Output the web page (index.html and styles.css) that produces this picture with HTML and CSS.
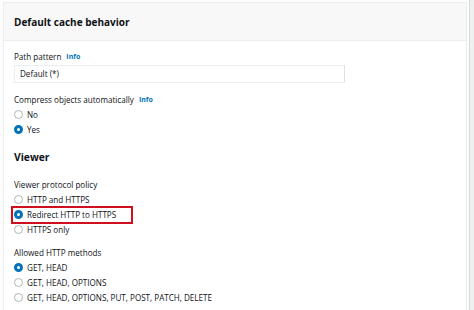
FILE: index.html
```html
<!DOCTYPE html>
<html>
	<head>
		<meta charset="UTF-8">
		<title>Default cache behavior</title>
		<link rel="stylesheet" href="styles.css">
	</head>
	<body>
		<div class="page">
			<div class="card">
				<div class="card-head">
					<h2>Default cache behavior</h2>
				</div>
				<div class="card-body">
					<div class="field">
						<div class="label">Path pattern <a class="info">Info</a></div>
						<div class="input">Default (*)</div>
					</div>
					<div class="field">
						<div class="label">Compress objects automatically <a class="info">Info</a></div>
						<div class="radio"><span class="dot"></span>No</div>
						<div class="radio"><span class="dot on"></span>Yes</div>
					</div>
					<h3>Viewer</h3>
					<div class="field">
						<div class="label">Viewer protocol policy</div>
						<div class="radio"><span class="dot"></span>HTTP and HTTPS</div>
						<div class="radio"><span class="mark"><span class="dot on"></span>Redirect HTTP to HTTPS</span></div>
						<div class="radio"><span class="dot"></span>HTTPS only</div>
					</div>
					<div class="field methods">
						<div class="label">Allowed HTTP methods</div>
						<div class="radio"><span class="dot on"></span>GET, HEAD</div>
						<div class="radio"><span class="dot"></span>GET, HEAD, OPTIONS</div>
						<div class="radio"><span class="dot"></span>GET, HEAD, OPTIONS, PUT, POST, PATCH, DELETE</div>
					</div>
				</div>
			</div>
		</div>
	</body>
</html>
```

FILE: styles.css
```css
*{
	margin:0;padding:0;
	box-sizing:border-box;
}
body{
	background:#eef0f0;
	font-family:"Open Sans","Liberation Sans",sans-serif;
	color:#0f1217;
	font-size:8.1px;
}
.page{
	width:470px;
	height:310px;
	padding:2px 2px 0 3px;
	background:#fdfdfd;
	border-right:1px solid #d5d9d9;
	overflow:hidden;
}
.card{
	background:#fff;
	border:1px solid #eaeded;
	border-bottom:none;
	height:308px;
}
.card-head{
	height:38px;
	background:#f8f8f8;
	border-bottom:1px solid #eaeded;
	padding-left:10px;
	display:flex;
	align-items:center;
}
h2{
	font-size:10px;
	font-weight:700;
}
.card-body{
	padding:9px 0 0 10px;
}
.field{
	margin-bottom:10px;
}
.label{
	height:14px;
	line-height:14px;
	display:flex;
	align-items:center;
	gap:5px;
}
.info{
	color:#0073bb;
	font-weight:700;
	font-size:7px;
}
.input{
	width:331px;
	height:18px;
	margin-top:1px;
	border:1px solid #eaeded;
	border-right-color:#dfe2e2;
	padding-left:5px;
	line-height:16px;
}
.radio{
	height:15px;
	display:flex;
	align-items:center;
}
.dot{
	width:9px;
	height:9px;
	border:1px solid #aab7b8;
	border-radius:50%;
	margin-right:4px;
	background:#fff;
}
.dot.on{
	border:3px solid #0073bb;
}
.mark{
	display:flex;
	align-items:center;
	height:18px;
	margin-left:-3px;
	padding:0 15px 0 1px;
	border:2px solid #d0101e;
}
h3{
	font-size:10.3px;
	font-weight:700;
	height:20px;
	line-height:20px;
	margin-bottom:11px;
}
.methods{
	margin-top:-1px;
}
```
